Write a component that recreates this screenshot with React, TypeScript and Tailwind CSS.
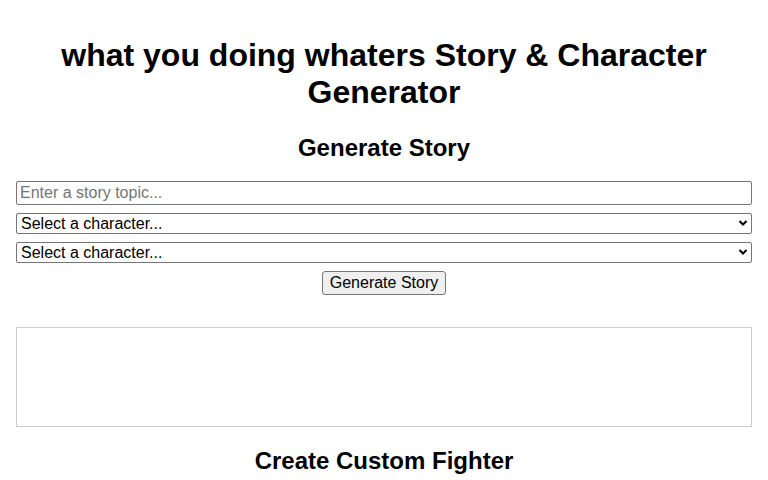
import React, { useState } from 'react';

const characters = ['Select a character...'];

function CharacterSelect({ value, onChange }: { value: string; onChange: (v: string) => void }) {
  return (
    <div className="relative mb-[8px]">
      <select
        value={value}
        onChange={(e) => onChange(e.target.value)}
        className="block w-full h-[21px] appearance-none rounded-[2px] border border-[#767676] bg-white pl-[4px] pr-[20px] text-[16px] leading-[19px] text-black"
      >
        {characters.map((c) => (
          <option key={c} value={c}>
            {c}
          </option>
        ))}
      </select>
      <svg
        className="pointer-events-none absolute right-[4px] top-[6px]"
        width="10"
        height="8"
        viewBox="0 0 10 8"
        fill="none"
      >
        <path d="M1.5 2 L5 5.5 L8.5 2" stroke="#000" strokeWidth="2" />
      </svg>
    </div>
  );
}

export default function App() {
  const [topic, setTopic] = useState('');
  const [charA, setCharA] = useState(characters[0]);
  const [charB, setCharB] = useState(characters[0]);

  return (
    <div className="min-h-screen bg-white p-4 text-black font-['Liberation_Sans',Arial,sans-serif]">
      <h1 className="mt-[21px] text-center text-[32px] font-bold leading-[37px]">
        what you doing whaters Story &amp; Character Generator
      </h1>

      <h2 className="mt-[23px] mb-[19px] text-center text-[24px] font-bold leading-[28px]">Generate Story</h2>

      <input
        type="text"
        value={topic}
        onChange={(e) => setTopic(e.target.value)}
        placeholder="Enter a story topic..."
        className="mb-[8px] block w-full h-[24px] rounded-[2px] border border-[#767676] px-[3px] text-[16px] placeholder:text-[#757575]"
      />
      <CharacterSelect value={charA} onChange={setCharA} />
      <CharacterSelect value={charB} onChange={setCharB} />

      <div className="flex justify-center">
        <button className="h-[24px] rounded-[3px] border border-[#767676] bg-[#efefef] px-[7px] text-[16px] leading-[20px]">
          Generate Story
        </button>
      </div>

      <div className="mt-[32px] h-[100px] border border-[#cccccc]"></div>

      <h2 className="mt-[20px] text-center text-[24px] font-bold leading-[28px]">Create Custom Fighter</h2>
    </div>
  );
}
